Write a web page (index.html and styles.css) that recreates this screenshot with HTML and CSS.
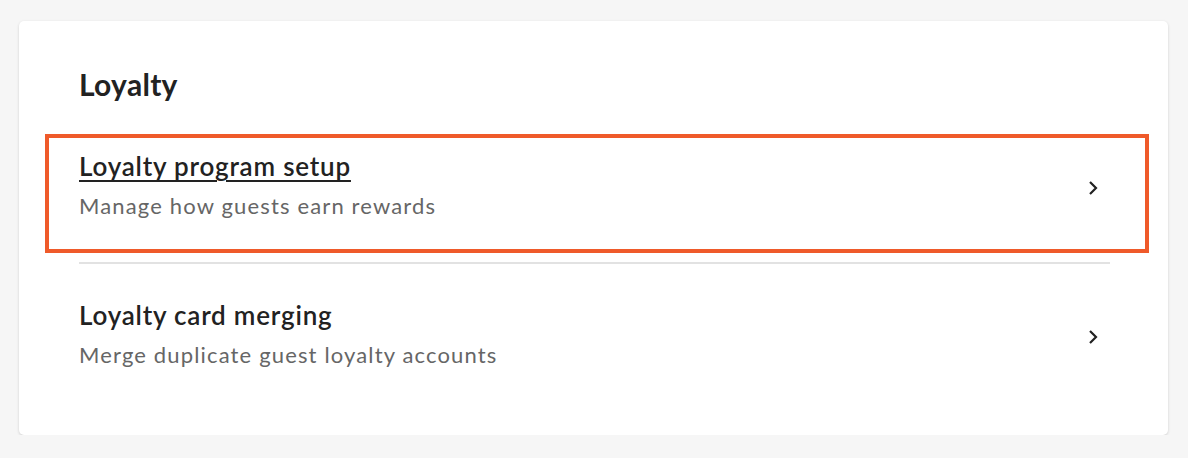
FILE: index.html
```html
<!DOCTYPE html>
<html lang="en">
<head>
  <meta charset="UTF-8">
  <title>Loyalty settings</title>
<link rel="stylesheet" href="styles.css">
</head>
<body>
<div class="card">
	<h2 class="heading">Loyalty</h2>

	<div class="list">
		<div class="item">
			<a class="link focused" href="#">
				<span class="text">
					<span class="title">Loyalty program setup</span>
					<span class="desc">Manage how guests earn rewards</span>
				</span>
				<svg class="chevron" width="10" height="16" viewBox="0 0 10 16"><path d="M2 2l6 6-6 6" fill="none" stroke="#222" stroke-width="2.2"/></svg>
			</a>
		</div>
		<div class="item">
			<a class="link" href="#">
				<span class="text">
					<span class="title">Loyalty card merging</span>
					<span class="desc">Merge duplicate guest loyalty accounts</span>
				</span>
				<svg class="chevron" width="10" height="16" viewBox="0 0 10 16"><path d="M2 2l6 6-6 6" fill="none" stroke="#222" stroke-width="2.2"/></svg>
			</a>
		</div>
	</div>
</div>
</body>
</html>
```

FILE: styles.css
```css
* {
	margin: 0;
	padding: 0;
	box-sizing: border-box;
}

body {
	background: #f6f6f6;
	font-family: Lato, "Noto Sans", sans-serif;
	color: #222;
	padding: 21px 20px 0 19px;
}

.card {
	width: 1149px;
	background: #fff;
	border-radius: 5px;
	box-shadow: 0 1px 3px rgba(0, 0, 0, 0.16);
	padding: 45px 58px 24px 60px;
}

.heading {
	font-size: 30px;
	font-weight: 700;
	line-height: 36px;
	letter-spacing: 0.3px;
	margin-bottom: 13px;
}

.item {
	padding: 19px 0 9px;
	border-bottom: 2px solid #e2e2e2;
}

.item:last-child {
	border-bottom: none;
}

.link {
	display: flex;
	align-items: flex-start;
	justify-content: space-between;
	margin: 0 -39px 0 -34px;
	padding: 10px 47px 29px 30px;
	border: 4px solid transparent;
	color: #222;
	text-decoration: none;
}

.link.focused {
	border-color: #ef5a2a;
}

.link.focused .title {
	text-decoration: underline;
	text-underline-offset: 4px;
	text-decoration-thickness: 2px;
}

.text {
	display: flex;
	flex-direction: column;
	gap: 8px;
}

.title {
	font-size: 26px;
	font-weight: 600;
	line-height: 36px;
	letter-spacing: 0.8px;
}

.desc {
	font-size: 22px;
	line-height: 28px;
	color: #666;
	letter-spacing: 1.15px;
}

.chevron {
	margin-top: 32px;
}
```
